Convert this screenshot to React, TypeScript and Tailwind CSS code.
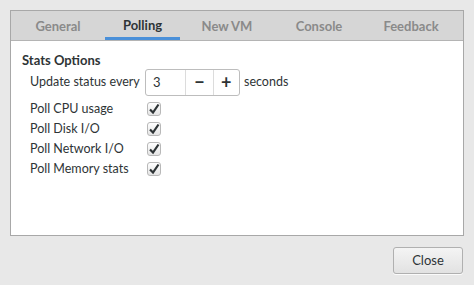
const tabs = [
  { name: 'General', w: 'w-[94px]' },
  { name: 'Polling', w: 'w-[75px]' },
  { name: 'New VM', w: 'w-[94px]' },
  { name: 'Console', w: 'w-[90px]' },
  { name: 'Feedback', w: 'w-[94px]' },
]

function Check() {
  return (
    <span className="flex h-[14px] w-[14px] items-center justify-center rounded-[3px] border border-[#b8b8b8] bg-gradient-to-b from-white to-[#e4e4e4]">
      <svg width="12" height="12" viewBox="0 0 12 12">
        <path d="M2 6.5 L5 9.5 L10.5 1.5" fill="none" stroke="#2e3436" strokeWidth="2.2" />
      </svg>
    </span>
  )
}

export default function App() {
  const rows = ['Poll CPU usage', 'Poll Disk I/O', 'Poll Network I/O', 'Poll Memory stats']
  return (
    <div
      className="flex h-[285px] w-[474px] flex-col bg-[#e8e8e8] text-[12.5px] text-[#2e3436]"
      style={{ fontFamily: 'Lato, "Open Sans", sans-serif' }}
    >
      <div className="mx-[10px] mt-[10px] flex h-[226px] flex-col border border-[#a8a8a8]">
        <div className="flex h-[30px] border-b border-[#b4b4b4] bg-[#d6d6d6] text-[13px] font-bold">
          {tabs.map((t) => (
            <div
              key={t.name}
              className={
                t.name === 'Polling'
                  ? `flex ${t.w} items-center justify-center whitespace-nowrap border-b-[3px] border-[#4a90d9] pt-[3px] text-[#2e3436]`
                  : `flex ${t.w} items-center justify-center whitespace-nowrap pt-[3px] text-[#8a8a8a]`
              }
            >
              {t.name}
            </div>
          ))}
        </div>
        <div className="flex-1 bg-white px-[11px] pt-[10px]">
          <div className="text-[13px] font-bold leading-[18px]">Stats Options</div>
          <div className="ml-[8px] flex items-center whitespace-nowrap">
            <span className="w-[115px]">Update status every</span>
            <div className="flex h-[27px] w-[95px] rounded-[3px] border border-[#bdbdbd] bg-white">
              <span className="flex w-[40px] items-center pl-[7px] text-[13px]">3</span>
              <span className="flex w-[28px] items-center justify-center border-l border-[#dcdcdc] text-[18px] font-bold">−</span>
              <span className="flex w-[27px] items-center justify-center border-l border-[#dcdcdc] text-[18px] font-bold">+</span>
            </div>
            <span className="ml-[4px]">seconds</span>
          </div>
          <div className="ml-[8px] mt-[3px] flex flex-col">
            {rows.map((r) => (
              <div key={r} className="flex h-[20px] items-center whitespace-nowrap">
                <span className="w-[117px]">{r}</span>
                <Check />
              </div>
            ))}
          </div>
        </div>
      </div>
      <div className="mr-[11px] mt-[11px] flex justify-end">
        <button className="h-[27px] w-[70px] rounded-[3px] border border-[#b0b0b0] bg-gradient-to-b from-[#f4f4f4] to-[#e2e2e2] text-[13px] text-[#2e3436] shadow-[0_1px_0_rgba(255,255,255,0.8)]">
          Close
        </button>
      </div>
    </div>
  )
}
